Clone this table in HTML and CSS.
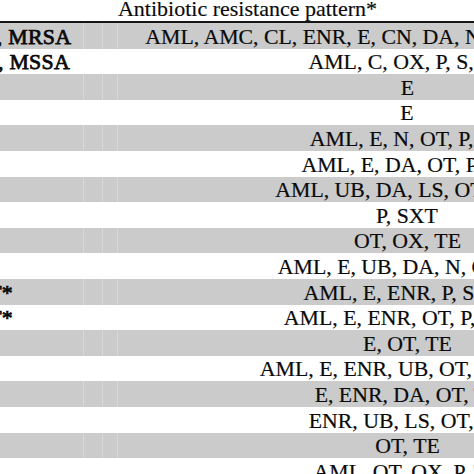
FILE: index.html
```html
<!DOCTYPE html>
<html lang="en">
<head>
<meta charset="utf-8">
<title>Antibiotic resistance pattern</title>
<link rel="stylesheet" href="styles.css">
</head>
<body>
<div class="sheet">
  <div class="head">
    <div class="cell name"></div>
    <div class="cell sep"></div>
    <div class="cell sep"></div>
    <div class="cell title">Antibiotic resistance pattern*</div>
  </div>
  <div class="row shade"><div class="cell name">S. aureus, MRSA</div><div class="cell sep"></div><div class="cell sep"></div><div class="cell pat">AML, AMC, CL, ENR, E, CN, DA, N, OT, OX, P, SXT, TE</div></div>
  <div class="row"><div class="cell name">S. aureus, MSSA</div><div class="cell sep"></div><div class="cell sep"></div><div class="cell pat">AML, C, OX, P, S, TE</div></div>
  <div class="row shade"><div class="cell name"></div><div class="cell sep"></div><div class="cell sep"></div><div class="cell pat">E</div></div>
  <div class="row"><div class="cell name"></div><div class="cell sep"></div><div class="cell sep"></div><div class="cell pat">E</div></div>
  <div class="row shade"><div class="cell name"></div><div class="cell sep"></div><div class="cell sep"></div><div class="cell pat">AML, E, N, OT, P, TE</div></div>
  <div class="row"><div class="cell name"></div><div class="cell sep"></div><div class="cell sep"></div><div class="cell pat">AML, E, DA, OT, P, TE</div></div>
  <div class="row shade"><div class="cell name"></div><div class="cell sep"></div><div class="cell sep"></div><div class="cell pat">AML, UB, DA, LS, OT, P, TE</div></div>
  <div class="row"><div class="cell name"></div><div class="cell sep"></div><div class="cell sep"></div><div class="cell pat">P, SXT</div></div>
  <div class="row shade"><div class="cell name"></div><div class="cell sep"></div><div class="cell sep"></div><div class="cell pat">OT, OX, TE</div></div>
  <div class="row"><div class="cell name"></div><div class="cell sep"></div><div class="cell sep"></div><div class="cell pat">AML, E, UB, DA, N, OT, TE</div></div>
  <div class="row shade"><div class="cell name">NT*</div><div class="cell sep"></div><div class="cell sep"></div><div class="cell pat">AML, E, ENR, P, S, TE</div></div>
  <div class="row"><div class="cell name">NT*</div><div class="cell sep"></div><div class="cell sep"></div><div class="cell pat">AML, E, ENR, OT, P, S, TE</div></div>
  <div class="row shade"><div class="cell name"></div><div class="cell sep"></div><div class="cell sep"></div><div class="cell pat">E, OT, TE</div></div>
  <div class="row"><div class="cell name"></div><div class="cell sep"></div><div class="cell sep"></div><div class="cell pat">AML, E, ENR, UB, OT, SXT, TE</div></div>
  <div class="row shade"><div class="cell name"></div><div class="cell sep"></div><div class="cell sep"></div><div class="cell pat">E, ENR, DA, OT, TE</div></div>
  <div class="row"><div class="cell name"></div><div class="cell sep"></div><div class="cell sep"></div><div class="cell pat">ENR, UB, LS, OT, TE</div></div>
  <div class="row shade"><div class="cell name"></div><div class="cell sep"></div><div class="cell sep"></div><div class="cell pat">OT, TE</div></div>
  <div class="row"><div class="cell name"></div><div class="cell sep"></div><div class="cell sep"></div><div class="cell pat">AML, OT, OX, P, TE</div></div>
</div>
</body>
</html>
```

FILE: styles.css
```css
html, body {
  margin: 0;
  padding: 0;
  background: #ffffff;
  overflow: hidden;
}

body {
  width: 474px;
  height: 474px;
  font-family: "Liberation Serif", "Times New Roman", serif;
  color: #0a0a0a;
}

.sheet {
  width: 795px;
  margin-left: -98px;
}

.head,
.row {
  display: grid;
  grid-template-columns: 181.3px 18.4px 15.3px 580px;
}

.head {
  height: 21px;
  border-bottom: 2px solid #151515;
}

.row {
  height: 25.6px;
}

.shade {
  background: #cbcbcb;
}

.cell {
  white-space: nowrap;
  box-sizing: border-box;
}

.title {
  font-size: 22px;
  line-height: 17px;
  padding-left: 1px;
  -webkit-text-stroke: 0.15px #0a0a0a;
}

.row .cell {
  font-size: 21.8px;
  line-height: 24px;
  padding-top: 1.6px;
}

.name {
  font-family: "Liberation Serif", serif;
  font-weight: normal;
  -webkit-text-stroke: 0.75px #0a0a0a;
  letter-spacing: 0.3px;
  text-align: center;
}

.pat {
  text-align: center;
  -webkit-text-stroke: 0.2px #0a0a0a;
}

.row.shade .sep,
.row.shade .pat {
  border-left: 1px solid rgba(255, 255, 255, 0.25);
}
```
